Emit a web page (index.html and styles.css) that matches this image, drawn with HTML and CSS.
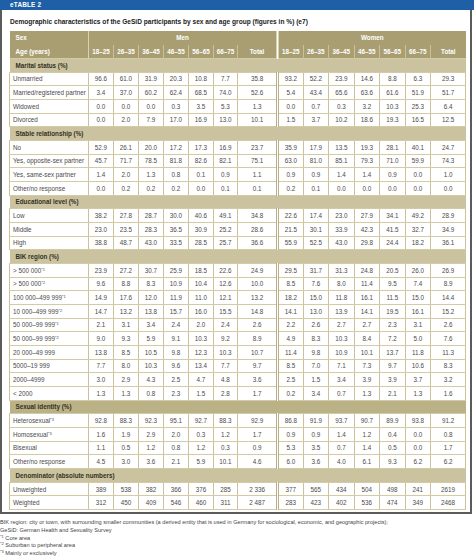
FILE: index.html
```html
<!DOCTYPE html>
<html>
<head>
<meta charset="utf-8">
<link rel="stylesheet" href="styles.css">
</head>
<body>
<div class="bar">eTABLE 2</div>
<div class="box">
<div class="caption">Demographic characteristics of the GeSiD participants by sex and age group (figures in %) (e7)</div>
<table class="tbl">
<colgroup>
<col class="c-lab"><col class="c-a"><col class="c-a"><col class="c-a"><col class="c-a"><col class="c-a"><col class="c-a6"><col class="c-mt">
<col class="c-w"><col class="c-w"><col class="c-w"><col class="c-w"><col class="c-w"><col class="c-w"><col class="c-wt">
</colgroup>
<thead>
<tr class="h1"><th class="lab">Sex</th><th colspan="7" class="grp">Men</th><th colspan="7" class="grp wf">Women</th></tr>
<tr class="h2"><th class="lab">Age (years)</th><th>18–25</th><th>26–35</th><th>36–45</th><th>46–55</th><th>56–65</th><th>66–75</th><th>Total</th><th class="wf">18–25</th><th>26–35</th><th>36–45</th><th>46–55</th><th>56–65</th><th>66–75</th><th>Total</th></tr>
</thead>
<tbody>
<tr class="sec"><td colspan="15">Marital status (%)</td></tr>
<tr><td class="lab">Unmarried</td><td>96.6</td><td>61.0</td><td>31.9</td><td>20.3</td><td>10.8</td><td>7.7</td><td>35.8</td><td class="wf">93.2</td><td>52.2</td><td>23.9</td><td>14.6</td><td>8.8</td><td>6.3</td><td>29.3</td></tr>
<tr><td class="lab">Married/registered partner</td><td>3.4</td><td>37.0</td><td>60.2</td><td>62.4</td><td>68.5</td><td>74.0</td><td>52.6</td><td class="wf">5.4</td><td>43.4</td><td>65.6</td><td>63.6</td><td>61.6</td><td>51.9</td><td>51.7</td></tr>
<tr><td class="lab">Widowed</td><td>0.0</td><td>0.0</td><td>0.0</td><td>0.3</td><td>3.5</td><td>5.3</td><td>1.3</td><td class="wf">0.0</td><td>0.7</td><td>0.3</td><td>3.2</td><td>10.3</td><td>25.3</td><td>6.4</td></tr>
<tr><td class="lab">Divorced</td><td>0.0</td><td>2.0</td><td>7.9</td><td>17.0</td><td>16.9</td><td>13.0</td><td>10.1</td><td class="wf">1.5</td><td>3.7</td><td>10.2</td><td>18.6</td><td>19.3</td><td>16.5</td><td>12.5</td></tr>
<tr class="sec"><td colspan="15">Stable relationship (%)</td></tr>
<tr><td class="lab">No</td><td>52.9</td><td>26.1</td><td>20.0</td><td>17.2</td><td>17.3</td><td>16.9</td><td>23.7</td><td class="wf">35.9</td><td>17.9</td><td>13.5</td><td>19.3</td><td>28.1</td><td>40.1</td><td>24.7</td></tr>
<tr><td class="lab">Yes, opposite-sex partner</td><td>45.7</td><td>71.7</td><td>78.5</td><td>81.8</td><td>82.6</td><td>82.1</td><td>75.1</td><td class="wf">63.0</td><td>81.0</td><td>85.1</td><td>79.3</td><td>71.0</td><td>59.9</td><td>74.3</td></tr>
<tr><td class="lab">Yes, same-sex partner</td><td>1.4</td><td>2.0</td><td>1.3</td><td>0.8</td><td>0.1</td><td>0.9</td><td>1.1</td><td class="wf">0.9</td><td>0.9</td><td>1.4</td><td>1.4</td><td>0.9</td><td>0.0</td><td>1.0</td></tr>
<tr><td class="lab">Other/no response</td><td>0.0</td><td>0.2</td><td>0.2</td><td>0.2</td><td>0.0</td><td>0.1</td><td>0.1</td><td class="wf">0.2</td><td>0.1</td><td>0.0</td><td>0.0</td><td>0.0</td><td>0.0</td><td>0.0</td></tr>
<tr class="sec"><td colspan="15">Educational level (%)</td></tr>
<tr><td class="lab">Low</td><td>38.2</td><td>27.8</td><td>28.7</td><td>30.0</td><td>40.6</td><td>49.1</td><td>34.8</td><td class="wf">22.6</td><td>17.4</td><td>23.0</td><td>27.9</td><td>34.1</td><td>49.2</td><td>28.9</td></tr>
<tr><td class="lab">Middle</td><td>23.0</td><td>23.5</td><td>28.3</td><td>36.5</td><td>30.9</td><td>25.2</td><td>28.6</td><td class="wf">21.5</td><td>30.1</td><td>33.9</td><td>42.3</td><td>41.5</td><td>32.7</td><td>34.9</td></tr>
<tr><td class="lab">High</td><td>38.8</td><td>48.7</td><td>43.0</td><td>33.5</td><td>28.5</td><td>25.7</td><td>36.6</td><td class="wf">55.9</td><td>52.5</td><td>43.0</td><td>29.8</td><td>24.4</td><td>18.2</td><td>36.1</td></tr>
<tr class="sec"><td colspan="15">BIK region (%)</td></tr>
<tr><td class="lab">&gt; 500 000<sup>*1</sup></td><td>23.9</td><td>27.2</td><td>30.7</td><td>25.9</td><td>18.5</td><td>22.6</td><td>24.9</td><td class="wf">29.5</td><td>31.7</td><td>31.3</td><td>24.8</td><td>20.5</td><td>26.0</td><td>26.9</td></tr>
<tr><td class="lab">&gt; 500 000<sup>*2</sup></td><td>9.6</td><td>8.8</td><td>8.3</td><td>10.9</td><td>10.4</td><td>12.6</td><td>10.0</td><td class="wf">8.5</td><td>7.6</td><td>8.0</td><td>11.4</td><td>9.5</td><td>7.4</td><td>8.9</td></tr>
<tr><td class="lab">100 000–499 999<sup>*1</sup></td><td>14.9</td><td>17.6</td><td>12.0</td><td>11.9</td><td>11.0</td><td>12.1</td><td>13.2</td><td class="wf">18.2</td><td>15.0</td><td>11.8</td><td>16.1</td><td>11.5</td><td>15.0</td><td>14.4</td></tr>
<tr><td class="lab">10 000–499 999<sup>*2</sup></td><td>14.7</td><td>13.2</td><td>13.8</td><td>15.7</td><td>16.0</td><td>15.5</td><td>14.8</td><td class="wf">14.1</td><td>13.0</td><td>13.9</td><td>14.1</td><td>19.5</td><td>16.1</td><td>15.2</td></tr>
<tr><td class="lab">50 000–99 999<sup>*1</sup></td><td>2.1</td><td>3.1</td><td>3.4</td><td>2.4</td><td>2.0</td><td>2.4</td><td>2.6</td><td class="wf">2.2</td><td>2.6</td><td>2.7</td><td>2.7</td><td>2.3</td><td>3.1</td><td>2.6</td></tr>
<tr><td class="lab">50 000–99 999<sup>*2</sup></td><td>9.0</td><td>9.3</td><td>5.9</td><td>9.1</td><td>10.3</td><td>9.2</td><td>8.9</td><td class="wf">4.9</td><td>8.3</td><td>10.3</td><td>8.4</td><td>7.2</td><td>5.0</td><td>7.6</td></tr>
<tr><td class="lab">20 000–49 999</td><td>13.8</td><td>8.5</td><td>10.5</td><td>9.8</td><td>12.3</td><td>10.3</td><td>10.7</td><td class="wf">11.4</td><td>9.8</td><td>10.9</td><td>10.1</td><td>13.7</td><td>11.8</td><td>11.3</td></tr>
<tr><td class="lab">5000–19 999</td><td>7.7</td><td>8.0</td><td>10.3</td><td>9.6</td><td>13.4</td><td>7.7</td><td>9.7</td><td class="wf">8.5</td><td>7.0</td><td>7.1</td><td>7.3</td><td>9.7</td><td>10.6</td><td>8.3</td></tr>
<tr><td class="lab">2000–4999</td><td>3.0</td><td>2.9</td><td>4.3</td><td>2.5</td><td>4.7</td><td>4.8</td><td>3.6</td><td class="wf">2.5</td><td>1.5</td><td>3.4</td><td>3.9</td><td>3.9</td><td>3.7</td><td>3.2</td></tr>
<tr><td class="lab">&lt; 2000</td><td>1.3</td><td>1.3</td><td>0.8</td><td>2.3</td><td>1.5</td><td>2.8</td><td>1.7</td><td class="wf">0.2</td><td>3.4</td><td>0.7</td><td>1.3</td><td>2.1</td><td>1.3</td><td>1.6</td></tr>
<tr class="sec sec-dark"><td colspan="15">Sexual identity (%)</td></tr>
<tr><td class="lab">Heterosexual<sup>*3</sup></td><td>92.8</td><td>88.3</td><td>92.3</td><td>95.1</td><td>92.7</td><td>88.3</td><td>92.9</td><td class="wf">86.8</td><td>91.9</td><td>93.7</td><td>90.7</td><td>89.9</td><td>93.8</td><td>91.2</td></tr>
<tr><td class="lab">Homosexual<sup>*3</sup></td><td>1.6</td><td>1.9</td><td>2.9</td><td>2.0</td><td>0.3</td><td>1.2</td><td>1.7</td><td class="wf">0.9</td><td>0.9</td><td>1.4</td><td>1.2</td><td>0.4</td><td>0.0</td><td>0.8</td></tr>
<tr><td class="lab">Bisexual</td><td>1.1</td><td>0.5</td><td>1.2</td><td>0.8</td><td>1.2</td><td>0.3</td><td>0.9</td><td class="wf">5.3</td><td>3.5</td><td>0.7</td><td>1.4</td><td>0.5</td><td>0.0</td><td>1.7</td></tr>
<tr><td class="lab">Other/no response</td><td>4.5</td><td>3.0</td><td>3.6</td><td>2.1</td><td>5.9</td><td>10.1</td><td>4.6</td><td class="wf">6.0</td><td>3.6</td><td>4.0</td><td>6.1</td><td>9.3</td><td>6.2</td><td>6.2</td></tr>
<tr class="sec"><td colspan="15">Denominator (absolute numbers)</td></tr>
<tr><td class="lab">Unweighted</td><td>389</td><td>538</td><td>382</td><td>366</td><td>376</td><td>285</td><td>2 336</td><td class="wf">377</td><td>565</td><td>434</td><td>504</td><td>498</td><td>241</td><td>2619</td></tr>
<tr><td class="lab">Weighted</td><td>312</td><td>450</td><td>409</td><td>546</td><td>460</td><td>311</td><td>2 487</td><td class="wf">283</td><td>423</td><td>402</td><td>536</td><td>474</td><td>349</td><td>2468</td></tr>
</tbody>
</table>
</div>
<div class="notes">
<p>BIK region: city or town, with surrounding smaller communities (a derived entity that is used in Germany for sociological, economic, and geographic projects);</p>
<p>GeSiD: German Health and Sexuality Survey</p>
<p><sup>*1</sup> Core area</p>
<p><sup>*2</sup> Suburban to peripheral area</p>
<p><sup>*3</sup> Mainly or exclusively</p>
</div>
</body>
</html>
```
FILE: styles.css
```css
body {
  margin: 0;
  background: #fff;
  font-family: "Liberation Sans Narrow", "Liberation Sans", Arial, sans-serif;
  color: #444;
}
.bar {
  background: #1f5fa7;
  color: #fff;
  font-family: "Liberation Sans", Arial, sans-serif;
  font-weight: bold;
  font-size: 6.4px;
  height: 10px;
  line-height: 10px;
  padding-left: 10px;
  letter-spacing: 0.2px;
}
.box {
  width: 468px;
  height: 502px;
  border: 2px solid #5b5b5b;
  border-top: 0;
}
.caption {
  height: 21px;
  box-sizing: border-box;
  padding: 7px 0 0 8px;
  line-height: 9px;
  font-size: 6.6px;
  font-weight: bold;
  color: #222;
}
.tbl {
  margin-left: 7px;
  width: 456px;
  table-layout: fixed;
  border-collapse: collapse;
  font-size: 6.3px;
}
.c-lab { width: 79px; }
.c-a { width: 25px; }
.c-a6 { width: 24px; }
.c-mt { width: 40px; }
.c-w { width: 25.5px; }
.c-wt { width: 35px; }
.tbl tr { height: 13.68px; }
.tbl th, .tbl td {
  padding: 0;
  text-align: center;
  white-space: nowrap;
  overflow: hidden;
}
.tbl thead th {
  background: #a99e72;
  color: #fff;
  font-family: "Liberation Sans", Arial, sans-serif;
  font-weight: bold;
}
.tbl .h1 th { border-bottom: 0; }
.tbl .h2 th { border-left: 1px solid #c9c09c; }
.tbl thead th.lab {
  text-align: left;
  padding-left: 6px;
  border-left: 0;
  border-right: 1px solid #d9d1b2;
}
.tbl thead th.wf { border-left: 3px double #d9d1b2; }
.tbl td {
  background: #fff;
  color: #4a4a4a;
  border-top: 1px solid #d3caa6;
  border-bottom: 1px solid #d3caa6;
  border-left: 1px solid #cbc29b;
  border-right: 1px solid #cbc29b;
}
.tbl td.lab {
  text-align: left;
  padding-left: 3px;
  font-family: "Liberation Sans", Arial, sans-serif;
  border-left: 1px solid #cbc29b;
}
.tbl td.wf { border-left: 3px double #b9ae85; }
.tbl tr.sec td {
  background: #cbc3a0;
  color: #33301f;
  font-family: "Liberation Sans", Arial, sans-serif;
  font-weight: bold;
  text-align: left;
  padding-left: 6px;
  border-left: 0;
  border-right: 0;
}
.tbl tr.sec-dark td { background: #bbb187; }
sup {
  font-size: 4px;
  line-height: 0;
  vertical-align: 2px;
}
.notes {
  padding-top: 5px;
  font-size: 5.6px;
  color: #444;
}
.notes p {
  margin: 0;
  line-height: 7.8px;
  white-space: nowrap;
}
```
